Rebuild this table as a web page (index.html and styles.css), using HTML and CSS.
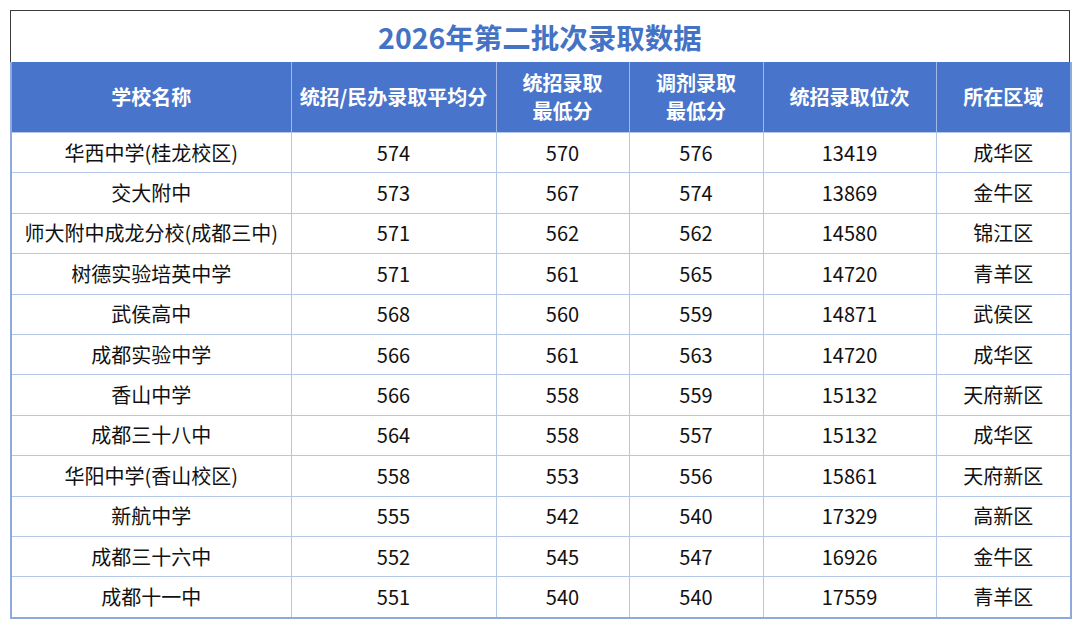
FILE: index.html
```html
<!DOCTYPE html>
<html lang="zh-CN">
<head>
<meta charset="utf-8">
<title>2026年第二批次录取数据</title>
<link rel="stylesheet" href="styles.css">
</head>
<body>
<div class="sheet">
  <div class="title">2026年第二批次录取数据</div>
  <table class="data">
    <colgroup>
      <col class="c1"><col class="c2"><col class="c3"><col class="c4"><col class="c5"><col class="c6">
    </colgroup>
    <thead>
      <tr>
        <th>学校名称</th>
        <th>统招/民办录取平均分</th>
        <th>统招录取<br>最低分</th>
        <th>调剂录取<br>最低分</th>
        <th>统招录取位次</th>
        <th>所在区域</th>
      </tr>
    </thead>
    <tbody>
      <tr><td>华西中学(桂龙校区)</td><td>574</td><td>570</td><td>576</td><td>13419</td><td>成华区</td></tr>
      <tr><td>交大附中</td><td>573</td><td>567</td><td>574</td><td>13869</td><td>金牛区</td></tr>
      <tr><td>师大附中成龙分校(成都三中)</td><td>571</td><td>562</td><td>562</td><td>14580</td><td>锦江区</td></tr>
      <tr><td>树德实验培英中学</td><td>571</td><td>561</td><td>565</td><td>14720</td><td>青羊区</td></tr>
      <tr><td>武侯高中</td><td>568</td><td>560</td><td>559</td><td>14871</td><td>武侯区</td></tr>
      <tr><td>成都实验中学</td><td>566</td><td>561</td><td>563</td><td>14720</td><td>成华区</td></tr>
      <tr><td>香山中学</td><td>566</td><td>558</td><td>559</td><td>15132</td><td>天府新区</td></tr>
      <tr><td>成都三十八中</td><td>564</td><td>558</td><td>557</td><td>15132</td><td>成华区</td></tr>
      <tr><td>华阳中学(香山校区)</td><td>558</td><td>553</td><td>556</td><td>15861</td><td>天府新区</td></tr>
      <tr><td>新航中学</td><td>555</td><td>542</td><td>540</td><td>17329</td><td>高新区</td></tr>
      <tr><td>成都三十六中</td><td>552</td><td>545</td><td>547</td><td>16926</td><td>金牛区</td></tr>
      <tr><td>成都十一中</td><td>551</td><td>540</td><td>540</td><td>17559</td><td>青羊区</td></tr>
    </tbody>
  </table>
</div>
</body>
</html>
```
FILE: styles.css
```css
html, body {
  margin: 0;
  padding: 0;
  background: #ffffff;
}

body {
  font-family: "Noto Sans CJK SC", "Noto Sans", sans-serif;
  color: #111111;
}

.sheet {
  width: 1060px;
  margin: 10px 0 0 10px;
}

.title {
  box-sizing: border-box;
  height: 52px;
  border: 1.5px solid #3c3c3c;
  border-bottom: none;
  display: flex;
  align-items: center;
  justify-content: center;
  font-size: 28.5px;
  font-weight: 700;
  color: #4472c4;
}

.data {
  width: 1060px;
  border-collapse: collapse;
  table-layout: fixed;
  border-left: 2px solid #8eaadc;
  border-right: 2px solid #8eaadc;
  border-bottom: 2px solid #8eaadc;
}

.c1 { width: 280px; }
.c2 { width: 205px; }
.c3 { width: 133px; }
.c4 { width: 134px; }
.c5 { width: 173px; }
.c6 { width: 135px; }

.data th {
  height: 70px;
  padding: 0;
  background: #4874cb;
  color: #ffffff;
  font-size: 20px;
  font-weight: 700;
  line-height: 28px;
  text-align: center;
  border-left: 1px solid #9fb8e6;
  border-right: 1px solid #9fb8e6;
}

.data td {
  height: 39.4px;
  padding: 0;
  font-size: 20px;
  line-height: 24px;
  text-align: center;
  white-space: nowrap;
  border: 1px solid #b4c7e7;
}

.data tbody tr:last-child td {
  border-bottom: 2px solid #8eaadc;
}
```
